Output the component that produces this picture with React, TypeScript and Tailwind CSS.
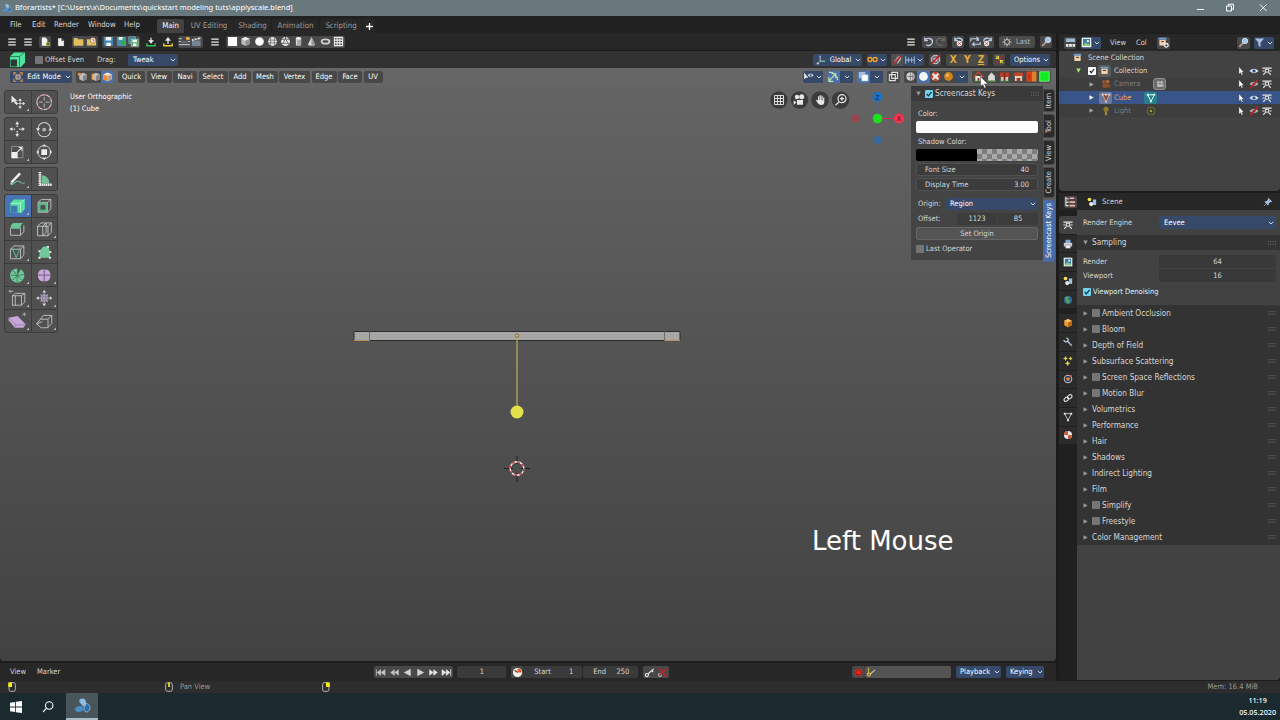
import React from "react";

interface IconProps {
  name: string;
  size?: number;
}

// 12x12 icon set shared by all editors
const ICONS: Record<string, React.ReactNode> = {
  menu: <path d="M1.5 2.5h9M1.5 6h9M1.5 9.5h9" stroke="#ececec" strokeWidth="1.5" />,
  newFile: (
    <>
      <path d="M2 1.5h4l2 2v7H2z" fill="#f2f2f2" />
      <circle cx="8.8" cy="8.6" r="2.4" fill="#b9b43a" />
      <path d="M8.8 7v3.2M7.2 8.6h3.2" stroke="#333" strokeWidth=".8" />
    </>
  ),
  file: <path d="M2.5 1.5h4.2L9.5 4.3v6.5h-7zM6.5 1.5v3h3" fill="#f4f4f4" stroke="#999" strokeWidth=".3" />,
  folder: <path d="M1 2.5h3.600l1 1.200H11v6.600H1z" fill="#e3bd5a" stroke="#f3dc8c" strokeWidth=".4" />,
  recent: (
    <>
      <path d="M1 3.5h3.6l1 1.2H11v5.6H1z" fill="#e3bd5a" />
      <circle cx="7.5" cy="4.5" r="3" fill="#f4e5d5" stroke="#7d5a30" strokeWidth=".6" />
      <path d="M7.5 3v1.7H9" stroke="#a33" strokeWidth=".8" fill="none" />
    </>
  ),
  save: (
    <>
      <path d="M1 1h10v10H2.2L1 9.8z" fill="#3f87b8" />
      <path d="M3 1h6v4H3zM3.6 7.3h5V11h-5z" fill="#f2f6f8" />
    </>
  ),
  saveAs: (
    <>
      <path d="M1 1h10v10H2.2L1 9.8z" fill="#4d8fb9" />
      <path d="M3 1h5v3H3z" fill="#f2f6f8" />
      <path d="M8 2v6M5.2 6 8 9.4 10.8 6" stroke="#28b53c" strokeWidth="2" fill="none" />
    </>
  ),
  saveCopy: (
    <>
      <path d="M.8.8h7.4v7.4H.8z" fill="#3c7ca8" stroke="#8ecb9b" strokeWidth=".6" />
      <path d="M3.5 3.5h7.7v7.7H3.5z" fill="#5ea571" stroke="#c6ead0" strokeWidth=".6" />
      <path d="M5 4h4.6v2.8H5zM5.5 8.3h3.7V11H5.5z" fill="#f4fff6" />
    </>
  ),
  import: (
    <>
      <path d="M1 7.5v3h10v-3" stroke="#35c04d" strokeWidth="1.6" fill="none" />
      <path d="M6 .8v5.4M4 4.5 6 7l2-2.500z" stroke="#f2f2f2" strokeWidth="1.4" fill="#f2f2f2" />
    </>
  ),
  export: (
    <>
      <path d="M1 7.5v3h10v-3" stroke="#e7cf35" strokeWidth="1.6" fill="none" />
      <path d="M6 8.5V3M4 3.700 6 1.2l2 2.500z" stroke="#f2f2f2" strokeWidth="1.4" fill="#f2f2f2" />
    </>
  ),
  renderImg: (
    <>
      <path d="M0 3h3M9 3h3M0 6h4M8 6h4M0 9.5h12" stroke="#ddd" strokeWidth="1" />
      <path d="M2 5.2h8v3H2z" fill="#5c666e" />
      <circle cx="9.5" cy="2.7" r="2" fill="#eda64c" />
    </>
  ),
  renderAnim: (
    <>
      <path d="M1 5h9.5v6H1z" fill="#768596" />
      <path d="m.8 3.6 9.3-2.3.4 2-9.3 2.2z" fill="#ddd" />
      <path d="m3 3 1 1.8M6 2.3l1 1.8" stroke="#333" strokeWidth=".9" />
    </>
  ),
  plane: <path d="M1 1h10v10H1z" fill="#fff" />,
  cube: (
    <>
      <path d="m6 1 4.5 2v5.6L6 11 1.5 8.6V3z" fill="#bcbcbc" />
      <path d="m6 1 4.5 2L6 5.2 1.5 3z" fill="#ececec" />
      <path d="M6 5.2V11l4.5-2.4V3z" fill="#929292" />
    </>
  ),
  circle: <circle cx="6" cy="6" r="4.7" fill="#fff" />,
  uvSphere: (
    <>
      <circle cx="6" cy="6" r="4.8" fill="#e8e8e8" />
      <path d="M1.2 4.5h9.6M1.2 7.5h9.6M4 1.6v8.8M8 1.6v8.8" stroke="#666" strokeWidth=".8" />
    </>
  ),
  icoSphere: (
    <>
      <circle cx="6" cy="6" r="4.8" fill="#e8e8e8" />
      <path d="M6 3 9 8H3zM6 1v2M9 8l2 1M3 8 1 9M1.5 4 6 3l4.5 1" stroke="#555" strokeWidth=".9" fill="none" />
    </>
  ),
  cylinder: (
    <>
      <path d="M3 2.5v7c0 2 6 2 6 0v-7z" fill="#a9a9a9" />
      <ellipse cx="6" cy="2.6" rx="3" ry="1.4" fill="#efefef" />
      <path d="M4 4v6" stroke="#e4e4e4" />
    </>
  ),
  cone: (
    <>
      <path d="m6 1 4 8.5C9 11 3 11 2 9.5z" fill="#d8d8d8" />
      <path d="m6 1 4 8.5q-1.500 1-4 1.100z" fill="#9b9b9b" />
    </>
  ),
  torus: <ellipse cx="6" cy="6" rx="4.3" ry="2.4" fill="none" stroke="#cfcfcf" strokeWidth="1.9" />,
  grid: <path d="M1.5 1.5h9v9h-9zM4.5 1.5v9M7.5 1.5v9M1.5 4.5h9M1.5 7.5h9" stroke="#f0f0f0" fill="none" strokeWidth="1.1" />,
  undo: <path d="M2 1.5V5h3.5M2.3 4.7C4 1.5 10.5 2 10.3 6.5 10 10.5 5.5 11 3.5 9.5" stroke="#b9c8da" strokeWidth="1.5" fill="none" />,
  redo: <path d="M10 1.5V5H6.5M9.7 4.7C8 1.5 1.5 2 1.7 6.5 2 10.5 6.5 11 8.5 9.5" stroke="#6a6a6a" strokeWidth="1.4" fill="none" />,
  history: (
    <>
      <path d="M2 1.5V5h3.5M2.3 4.7C4 1 10.5 2 10 6" stroke="#b9cfe4" strokeWidth="1.4" fill="none" />
      <circle cx="7" cy="8.2" r="2.9" fill="#f2e6e2" />
      <path d="m5.5 7 3 2.4M8.5 7l-3 2.4" stroke="#c33" strokeWidth=".8" />
    </>
  ),
  repeatLast: (
    <>
      <path d="M10 1.5V5H6.5M9.7 4.7C8 1 1.5 2 2 6" stroke="#b9cfe4" strokeWidth="1.4" fill="none" />
      <circle cx="5" cy="8.2" r="2.9" fill="#f2e6e2" />
      <path d="m3.5 7 3 2.4M6.5 7l-3 2.4" stroke="#c33" strokeWidth=".8" />
    </>
  ),
  repeat: <path d="M9 5.500V3H.8v3M3 9h8.200V6.500M5 7 2.800 9 5 11M7 1l2.200 2L7 5" stroke="#b9cfe4" strokeWidth="1.2" fill="none" />,
  gear: (
    <>
      <circle cx="6" cy="6" r="3" fill="none" stroke="#ccc" strokeWidth="1.2" />
      <path d="M6 .5v2M6 9.5v2M.5 6h2M9.500 6h2M2.2 2.2l1.2 1.2M8.6 8.6l1.2 1.2M9.8 2.2 8.6 3.4M3.4 8.6 2.2 9.8" stroke="#ccc" strokeWidth="1.1" />
    </>
  ),
  search: (
    <>
      <path d="M5.5 6.5 1.5 10.7" stroke="#b99b8d" strokeWidth="2" />
      <circle cx="7.6" cy="4.3" r="3" fill="#9ec4e8" stroke="#dce9f5" strokeWidth=".9" />
    </>
  ),
  axes: (
    <>
      <path d="M5 1.5v6h6M5 7.5 2 10.5" stroke="#d6d6d6" strokeWidth="1" fill="none" />
      <path d="M5 7.5h6" stroke="#5fc08a" strokeWidth="1" />
      <circle cx="5" cy="1.8" r="1.2" fill="#6aa5de" />
      <circle cx="2" cy="10.3" r="1.2" fill="#ddd" />
    </>
  ),
  pivot: (
    <>
      <circle cx="3.2" cy="6" r="2.2" fill="#4a3a20" stroke="#f0a73a" strokeWidth="1.5" />
      <circle cx="8.8" cy="6" r="2.2" fill="#4a3a20" stroke="#f0a73a" strokeWidth="1.5" />
    </>
  ),
  magnet: (
    <>
      <path d="M3 8.5 7 3c2-1.500 4 .5 2.600 2.500L6.500 10" stroke="#bbb" strokeWidth="1.6" fill="none" />
      <path d="M1.5 10.5 10.5 1.5" stroke="#c22733" strokeWidth="1.9" />
    </>
  ),
  snapInc: <path d="M.8 1.5v9M4 3v6M8 3v6M11.2 1.5v9M.8 6h10.4" stroke="#9fc1e6" strokeWidth="1.1" />,
  noProp: (
    <>
      <circle cx="6" cy="6" r="4.600" fill="#777" stroke="#d5d5d5" strokeWidth="1" />
      <circle cx="6" cy="6" r="2" fill="#eee" />
      <path d="M1.5 10.5 10.5 1.5" stroke="#c8202c" strokeWidth="2" />
    </>
  ),
  mirrorOff: (
    <>
      <path d="m1.800 1.800 8.400 8.400" stroke="#b7c04a" strokeWidth="1.300" />
      <path d="m10.500 1.500-9 9" stroke="#a33030" strokeWidth="1.300" />
      <path d="M4.800 1.800v3h-3M7.200 10.200v-3h3" stroke="#e3d446" strokeWidth="1.400" fill="none" />
    </>
  ),
  editMode: (
    <>
      <path d="M3.5 3.5h5v5h-5z" fill="#8a7361" stroke="#f2efe8" strokeWidth=".8" />
      <path d="M1 4V1h3M8 1h3v3M11 8v3H8M4 11H1V8" stroke="#f0963a" strokeWidth="1.3" fill="none" />
    </>
  ),
  vertSel: (
    <>
      <path d="m6.5 2 4 1.5V9l-4 2-4-2V3.5z" fill="#bdbdbd" />
      <path d="M6.5 5.5V11l4-2V3.5z" fill="#858585" />
      <circle cx="2.5" cy="3.5" r="1.6" fill="#f09a3a" />
    </>
  ),
  edgeSel: (
    <>
      <path d="m6.5 2 4 1.5V9l-4 2-4-2V3.5z" fill="#bdbdbd" />
      <path d="M6.5 5.5V11l4-2V3.5z" fill="#858585" />
      <path d="M2.5 3v6.5" stroke="#f09a3a" strokeWidth="1.5" />
    </>
  ),
  faceSel: (
    <>
      <path d="m6 1.5 4.5 2v5.7L6 11.2 1.5 9.2V3.5z" fill="#f3e6d4" />
      <path d="M1.5 3.5 6 5.5v5.7l-4.5-2z" fill="#ee8c2b" />
      <path d="M6 5.5v5.7l4.5-2V3.5z" fill="#b8a391" />
    </>
  ),
  selectable: (
    <>
      <path d="M1.2 1.500v7.500l2-1.700h2.600z" fill="#e6e6e6" />
      <path d="M5 4.500q3.300-3.500 6.600 0-3.300 3.500-6.600 0" fill="#e9edf2" />
      <circle cx="8.300" cy="4.500" r="1.300" fill="#3c6db0" />
    </>
  ),
  gizmoShow: <path d="M1 1.500c5-1 9 3 9.500 8.500M1 11l7-7.500M1 6.5v4.800h4.600M8.500 7.500V3H4" stroke="#c4e6a0" strokeWidth="1.2" fill="none" />,
  overlays: (
    <>
      <path d="M1 1h7v7H1z" fill="#a9bfdf" />
      <path d="M4 4h7v7H4z" fill="#fff" stroke="#9bb2d6" strokeWidth=".6" />
    </>
  ),
  xray: (
    <>
      <path d="M4 1.5h6.5V8H4z" fill="none" stroke="#ddd" strokeWidth="1.2" />
      <path d="M1.500 4H8v6.5H1.5z" fill="none" stroke="#ddd" strokeWidth="1.2" />
    </>
  ),
  wire: (
    <>
      <circle cx="6" cy="6" r="4.6" fill="#d5d5d5" />
      <path d="M1.5 6h9M6 1.400v9.2M8.5 2.500v7" stroke="#666" strokeWidth=".8" />
    </>
  ),
  solid: <circle cx="6" cy="6" r="4.8" fill="#f4f7fb" />,
  material: (
    <>
      <circle cx="6" cy="6" r="4.8" fill="#f2e7e4" />
      <path d="M6 4 3 1.900A4.800 4.800 0 0 1 9 1.900zM6 8l3 2.100A4.800 4.800 0 0 1 3 10.100zM4 6 1.900 9A4.800 4.800 0 0 1 1.900 3zM8 6l2.100-3A4.800 4.800 0 0 1 10.100 9z" fill="#c8402f" />
    </>
  ),
  rendered: (
    <>
      <circle cx="6" cy="6" r="4.8" fill="#cf8420" />
      <circle cx="4.7" cy="4.5" r="1.8" fill="#f1b45c" />
    </>
  ),
  home: (
    <>
      <path d="M2.5 5.5h7V11h-7z" fill="#f0e4d5" />
      <path d="M.800 6.500 6 1l5.200 5.500" stroke="#b8472f" strokeWidth="1.700" fill="none" />
      <path d="M5 7.500h2V11H5z" fill="#84402a" />
      <path d="M1 11.200h10" stroke="#3e8a3b" />
    </>
  ),
  homeWhite: (
    <>
      <path d="M2.300 5.500 6 1.500l3.700 4v5H2.300z" fill="#d9d9d9" />
      <path d="M1 11h10" stroke="#55a94a" />
    </>
  ),
  homeRed: (
    <>
      <path d="M1 1.500h10v5H1z" fill="#b8402c" />
      <path d="M2 6.500h8V11H2z" fill="#d3c7b7" />
      <path d="M5 1.500h2V11H5z" fill="#7e2f22" />
      <path d="M1 11.200h10" stroke="#3e8a3b" />
    </>
  ),
  homeFront: (
    <>
      <path d="M1.5 1.5h9l1 4H.5z" fill="#c0452c" />
      <path d="M2 5.5h8V11H2z" fill="#e2cfba" />
      <path d="M4 7.5h4V11H4z" fill="#a03a28" />
    </>
  ),
  homeSplit: (
    <>
      <path d="M.5.5h6v11h-6z" fill="#e23c18" />
      <path d="M6.5.5h5v11h-5z" fill="#d9832c" />
      <path d="M3.5 3v6" stroke="#8c2b12" strokeWidth="1" />
    </>
  ),
  greenBox: <path d="M.8.8h10.400v10.400H.8z" fill="#10ea20" stroke="#9aff9a" strokeWidth=".8" />,
  outliner: (
    <>
      <path d="M1 1.5h10v4H1z" fill="#9fbbd4" />
      <path d="M1 7.5h10v3H1z" fill="#ececec" />
      <path d="M4 8v2.5M8 8v2.5" stroke="#555" />
    </>
  ),
  viewLayer: (
    <>
      <path d="M.8.8h10.400v10.400H.8z" fill="#f1f5f8" />
      <path d="M2.2 2.2h7.6v7.6H2.2z" fill="#3b79a8" />
      <path d="m2.2 9.8 3-4L7 7.800l1-1 1.800 3z" fill="#8fd27d" />
      <circle cx="7.5" cy="4.5" r="1.2" fill="#fff" />
    </>
  ),
  collection: (
    <>
      <path d="M1 1h10v2.5H1z" fill="#6d9bd0" />
      <path d="M1.8 3.8h8.4v7H1.8z" fill="#f0cfae" />
      <path d="M4 5.8h4" stroke="#3c3026" strokeWidth="1.3" />
    </>
  ),
  newCollection: (
    <>
      <path d="M.8.8h8.4v2.3H.8z" fill="#6d9bd0" />
      <path d="M1.5 3.4h7v6h-7z" fill="#f0cfae" />
      <path d="M3.5 5h3" stroke="#3c3026" strokeWidth="1" />
      <circle cx="9" cy="9" r="2.7" fill="#fff" />
      <path d="M9 7.3v3.4M7.3 9h3.4" stroke="#333" strokeWidth=".9" />
    </>
  ),
  filter: <path d="M1 1.5h10L7.2 6v5L4.800 9.500V6z" fill="#a9c0dd" />,
  pointer: <path d="M3.5.8v9l2-1.800 1.400 3 1.500-.7L7 7.500h2.500z" fill="#fafafa" stroke="#222" strokeWidth=".4" />,
  eye: (
    <>
      <path d="M.5 6Q6 .8 11.5 6 6 11.2.5 6" fill="#e7edf5" />
      <circle cx="6" cy="6" r="2.2" fill="#4674b8" />
      <circle cx="6" cy="6" r="1" fill="#16243c" />
    </>
  ),
  eyeOff: (
    <>
      <path d="M.5 6Q6 .8 11.5 6 6 11.2.5 6" fill="#b4b4b4" />
      <circle cx="6" cy="6" r="1.8" fill="#444" />
      <path d="M1.5 11 10.5 1" stroke="#c31f2b" strokeWidth="1.9" />
    </>
  ),
  restrict: (
    <>
      <path d="M.5 2.500h11M.5 6h2.5M9 6h2.5M1.500 10.500 4 8M10.500 10.500 8 8" stroke="#e8e8e8" strokeWidth="1.3" />
      <path d="M3.500 3.500h5V8h-5z" fill="#d5d5d5" />
      <circle cx="6" cy="5.7" r="1.3" fill="#3c3c3c" />
    </>
  ),
  cameraObj: (
    <>
      <circle cx="3.5" cy="3.5" r="2.3" fill="#94552f" />
      <circle cx="8" cy="3.2" r="2.3" fill="#a8653a" />
      <path d="M2 6h7v4.500H2zM9 7.500l2.500-1.200v4L9 9z" fill="#8a4f2c" />
    </>
  ),
  cameraData: (
    <>
      <circle cx="4" cy="4" r="1.8" fill="#b5b5b5" />
      <circle cx="8" cy="4" r="1.8" fill="#b5b5b5" />
      <path d="M2.500 6h6v3.500h-6zM8.500 7l2-1v3.500l-2-.8z" fill="#b5b5b5" />
    </>
  ),
  meshObj: (
    <>
      <path d="M2 2h8L6 10.500z" fill="#7b5148" stroke="#e9a987" strokeWidth="1" />
      <path d="M1 1h2v2H1zM9 1h2v2H9zM5 9.500h2v2H5zM5 1h2v2H5z" fill="#f3d8cb" />
    </>
  ),
  meshData: (
    <>
      <path d="M2 2.2h8L6 10z" fill="none" stroke="#dff5f0" strokeWidth="1.2" />
      <path d="M1 1h2v2H1zM9 1h2v2H9zM5 9h2v2H5z" fill="#f0fffc" />
    </>
  ),
  lightObj: (
    <>
      <circle cx="6" cy="4" r="3" fill="#8f7b22" />
      <path d="M4.700 6.500h2.600V11H4.700z" fill="#9b8a3a" />
    </>
  ),
  lightData: (
    <>
      <circle cx="6" cy="6" r="4.8" fill="none" stroke="#7f7a20" strokeWidth="1" />
      <circle cx="6" cy="6" r="1.5" fill="#a89e28" />
    </>
  ),
  propEditor: (
    <>
      <path d="M1 1v9.5h3M1 3h3M1 6.7h3" stroke="#ddd" strokeWidth="1.2" fill="none" />
      <path d="M5 2.500h5M5 6.700h6M5 10.500h6" stroke="#f0b0a4" strokeWidth="1.7" />
    </>
  ),
  scene: (
    <>
      <circle cx="3" cy="3" r="2.2" fill="#f4e25a" />
      <path d="M7 3h4v6.500H7z" fill="#9bc2e8" />
      <circle cx="5" cy="8.5" r="2.5" fill="#e9e9e9" />
    </>
  ),
  pin: <path d="m6.5 1.500 4 4-2 .3-2 2-.3 2L2.200 5.800l2-.3 2-2zM4 8 1 11" fill="#9bbfe6" stroke="#cfe0f3" strokeWidth=".7" />,
  output: (
    <>
      <path d="M3 .8h6V5H3z" fill="#79a7d8" />
      <path d="M1 4.500h10V9H1z" fill="#c9cdd3" />
      <path d="M3 7.500h6v3.700H3z" fill="#f4f4f4" stroke="#777" strokeWidth=".5" />
    </>
  ),
  world: (
    <>
      <circle cx="6" cy="6" r="4.8" fill="#2f68a0" />
      <path d="M2 3q3-2 5-.5L6 5l2.500 2L7 10.300Q4 10.500 3.500 7.500z" fill="#4fa552" />
    </>
  ),
  object: (
    <>
      <path d="m6 1.200 4.500 2v5.500L6 11 1.500 8.700V3.200z" fill="#f09a2a" />
      <path d="M6 5.300V11l4.500-2.300V3.200z" fill="#b8650e" />
      <path d="m6 1.200 4.500 2L6 5.300 1.500 3.200z" fill="#ffc163" />
    </>
  ),
  wrench: (
    <>
      <path d="M5 4.500l5.500 6" stroke="#a8b7cf" strokeWidth="1.900" />
      <path d="M1 3.500c.5 2.500 3 3 4.500 1.500S6.500 1.500 4 1" stroke="#c3cee0" strokeWidth="1.500" fill="none" />
    </>
  ),
  particles: (
    <path
      d="M3 .5 3.700 2.300 5.500 3l-1.800.7L3 5.500l-.7-1.800L.5 3l1.800-.7zM9 1l.6 1.400L11 3l-1.400.6L9 5l-.6-1.400L7 3l1.400-.6zM5.500 6l.8 2 2 .8-2 .8-.8 2-.8-2-2-.8 2-.8z"
      fill="#f1e04d"
      stroke="#f1e04d"
      strokeWidth=".5"
    />
  ),
  physics: (
    <>
      <circle cx="6" cy="6" r="4.6" fill="#23395d" stroke="#e4ddd4" strokeWidth="1" />
      <circle cx="6" cy="6" r="2.2" fill="#ec8b3b" />
      <circle cx="9.5" cy="2.500" r="1.2" fill="#e0552f" />
    </>
  ),
  constraint: (
    <g fill="none" stroke="#dcdcdc" strokeWidth="1.4">
      <ellipse cx="4" cy="7.5" rx="3" ry="2.1" transform="rotate(-40 4 7.5)" />
      <ellipse cx="8" cy="4.5" rx="3" ry="2.1" transform="rotate(-40 8 4.5)" />
    </g>
  ),
  meshTab: (
    <>
      <path d="M2 2h8L6 10z" fill="none" stroke="#ddd" strokeWidth="1" />
      <path d="M1 1h2v2H1zM9 1h2v2H9zM5 9h2v2H5z" fill="#f4f4f4" />
    </>
  ),
  matTab: (
    <>
      <circle cx="6" cy="6" r="4.8" fill="#f0e8e4" />
      <path d="M6 6V1.200A4.800 4.800 0 0 0 1.200 6zM6 6v4.800A4.800 4.800 0 0 0 10.800 6z" fill="#c65a3a" />
    </>
  ),
  toStart: <path d="M1.5 2.500v7M6.200 3v6L2.500 6zM10.800 3v6L7 6z" fill="#c4c4c4" stroke="#c4c4c4" strokeWidth=".9" />,
  prevKey: <path d="M5.800 3v6l-4-3zM10.300 3v6l-4-3z" fill="#c4c4c4" stroke="#c4c4c4" strokeWidth=".6" />,
  playBack: <path d="M9.500 1.800v8.400L2 6z" fill="#d2d2d2" />,
  play: <path d="M2.500 1.800v8.400L10 6z" fill="#d2d2d2" />,
  nextKey: <path d="M1.700 3v6l4-3zM6.200 3v6l4-3z" fill="#e6e6e6" stroke="#e6e6e6" strokeWidth=".6" />,
  toEnd: <path d="M10.500 2.500v7M5.800 3v6l3.700-3zM1.200 3v6L5 6z" fill="#e6e6e6" stroke="#e6e6e6" strokeWidth=".9" />,
  clock: (
    <>
      <circle cx="6" cy="6" r="5" fill="#f4f0ea" />
      <path d="M6 6V1.500A4.500 4.500 0 0 1 10.500 6z" fill="#d9602e" />
      <path d="M6 6 3 3.500" stroke="#7a2c18" strokeWidth="1.3" />
    </>
  ),
  key: (
    <>
      <circle cx="3.2" cy="8.8" r="1.7" fill="none" stroke="#eee" strokeWidth="1.2" />
      <path d="M4.500 7.500 10.500 2M8.500 4l1.500 1.700" stroke="#eee" strokeWidth="1.3" />
    </>
  ),
  keyOff: (
    <>
      <circle cx="3.2" cy="8.8" r="1.7" fill="none" stroke="#c9a0a0" strokeWidth="1.2" />
      <path d="m2 1.500 8.500 9M10.500 1.500 4 8" stroke="#b3262e" strokeWidth="1.9" />
    </>
  ),
  record: (
    <>
      <circle cx="6" cy="6" r="4" fill="#5b1a1a" stroke="#d9413c" strokeWidth=".9" />
      <circle cx="6" cy="6" r="2.7" fill="#f01f1f" />
    </>
  ),
  keySet: (
    <>
      <path d="M3 1v8" stroke="#c8a93c" strokeWidth="1.5" />
      <circle cx="3.5" cy="9" r="1.9" fill="none" stroke="#d9ba46" strokeWidth="1.3" />
      <path d="M5 8.500 11 3.500" stroke="#d8d0a8" strokeWidth="1.3" />
    </>
  ),
  mouseL: (
    <>
      <rect x="2.5" y=".8" width="7.5" height="10.4" rx="2" fill="none" stroke="#ccc" strokeWidth="1" />
      <path d="M1.500.500H6V6H1.500z" fill="#f0ee1c" />
    </>
  ),
  mouseM: (
    <>
      <rect x="2" y=".8" width="8" height="10.4" rx="2.5" fill="none" stroke="#ccc" strokeWidth="1" />
      <path d="M5 1h2v5H5z" fill="#f0ee1c" />
    </>
  ),
  mouseR: (
    <>
      <rect x="2" y=".8" width="7.5" height="10.4" rx="2" fill="none" stroke="#ccc" strokeWidth="1" />
      <path d="M6 .500h4.500V6H6z" fill="#f0ee1c" />
    </>
  ),
  logo: (
    <>
      <path d="M.5 8.800C1.500 6.500 4 5.800 6.200 6.800 7.500 8 6 10.500 3.500 10.500 2 10.500.8 10 .5 8.800z" fill="#4a8fc7" />
      <path d="M3.800 2C6 .2 8.800 1 8.600 4.800L6.800 7C5.500 5 3 3.800 3.800 2z" fill="#8abde4" />
      <path d="M8.200 4.500c2 0 3.500 1.800 3 4C10.500 11.200 7.300 11 7 9c0-1.500 1.300-2.500 1.200-4.500z" fill="#2f6ca8" stroke="#a8cdea" strokeWidth=".5" />
    </>
  ),
};

const Icon: React.FC<IconProps> = ({ name, size = 10 }) => (
  <svg width={size} height={size} viewBox="0 0 12 12" className="block shrink-0">
    {ICONS[name]}
  </svg>
);

const Chevron = () => (
  <svg width="6" height="4" viewBox="0 0 6 4" className="block shrink-0">
    <path d="M.8.8 3 3 5.200.8" stroke="#cfd8e6" strokeWidth="1" fill="none" />
  </svg>
);

const Grip = () => (
  <svg width="8" height="4" viewBox="0 0 8 4" className="block shrink-0">
    <path d="M0 .7h8M0 3.200h8" stroke="#777" strokeWidth=".9" strokeDasharray="1 1.3" />
  </svg>
);

const Arrow: React.FC<{ open?: boolean; color?: string }> = ({ open, color = "#9a9a9a" }) => (
  <svg width="5" height="5" viewBox="0 0 5 5" className="block shrink-0">
    <path d={open ? "M.3.5h4.400L2.500 4.700z" : "M.5.3v4.400L4.700 2.500z"} fill={color} />
  </svg>
);

const Check: React.FC<{ on?: boolean }> = ({ on }) =>
  on ? (
    <svg width="8" height="8" viewBox="0 0 8 8" className="block shrink-0">
      <rect width="8" height="8" rx="1" fill="#70d3f0" />
      <path d="m1.700 4 1.700 1.800L6.500 2" stroke="#14323c" strokeWidth="1.2" fill="none" />
    </svg>
  ) : (
    <div className="h-2 w-2 shrink-0 rounded-[1px] bg-[#757575]" />
  );

// Row of icon buttons that share one background
const IconGroup: React.FC<{
  icons: string[];
  className: string;
  active?: number;
  chevron?: boolean;
  blue?: boolean;
}> = ({ icons, className, active, chevron, blue }) => (
  <div
    className={`flex h-3 shrink-0 overflow-hidden rounded-[2px] ${blue ? "bg-[#374968]" : "bg-[#484848]"} ${className}`}
  >
    {icons.map((icon, i) => (
      <div
        key={icon + i}
        className={`flex flex-1 items-center justify-center ${active === i ? "bg-[#4a70b0]" : ""}`}
      >
        <Icon name={icon} size={11} />
      </div>
    ))}
    {chevron && (
      <div className="flex flex-1 items-center justify-center bg-[#374968]">
        <Chevron />
      </div>
    )}
  </div>
);

const TitleBar = () => (
  <div className="flex h-4 items-center bg-[#69787d] pl-0.5 font-['Noto_Sans','Open_Sans',sans-serif] text-white">
    <Icon name="logo" size={10} />
    <span className="ml-[3px] text-[7.5px] leading-none">
      Bforartists* [C:\Users\x\Documents\quickstart modeling tuts\applyscale.blend]
    </span>
    <svg width="80" height="10" viewBox="0 0 80 10" className="ml-auto mr-[8px]">
      <path d="M5 6.500h7M68 1.500 74.500 8M74.500 1.500 68 8" stroke="#fff" strokeWidth="1" />
      <path d="M34.500 3h5v5h-5zM36.500 3V1.200h5v5h-2" stroke="#fff" strokeWidth="1" fill="none" />
    </svg>
  </div>
);

const workspaces = [
  { name: "Main", width: "w-[27px]" },
  { name: "UV Editing", width: "w-[48px]" },
  { name: "Shading", width: "w-[37px]" },
  { name: "Animation", width: "w-[47px]" },
  { name: "Scripting", width: "w-[42px]" },
];

const MenuBar = () => (
  <div className="flex h-[17px] bg-[#212121]">
    <div className="flex h-[17px] items-center pl-[10px] text-[7.8px]">
      <span className="w-[22px]">File</span>
      <span className="w-[22px]">Edit</span>
      <span className="w-[34px]">Render</span>
      <span className="w-[36px]">Window</span>
      <span className="w-[33px]">Help</span>
    </div>
    <div className="flex gap-px pt-[3px] text-[7.8px] text-[#9c9c9c]">
      {workspaces.map((w, i) => (
        <div
          key={w.name}
          className={`flex h-[14px] items-center justify-center rounded-t-[2px] ${w.width} ${
            i === 0 ? "bg-[#424242] text-white" : "bg-[#272727]"
          }`}
        >
          {w.name}
        </div>
      ))}
      <div className="flex w-3 items-center justify-center bg-[#272727]">
        <svg width="7" height="7" viewBox="0 0 7 7">
          <path d="M3.5 0v7M0 3.5h7" stroke="#fff" strokeWidth="1.3" />
        </svg>
      </div>
    </div>
  </div>
);

const Toolbar = () => (
  <div className="flex h-[17px] items-center bg-[#272727] pl-[7px] pr-1">
    <Icon name="menu" />
    <div className="ml-1.5">
      <Icon name="menu" />
    </div>
    <IconGroup className="ml-[6px] w-3" icons={["newFile"]} />
    <div className="ml-[5px]">
      <Icon name="file" />
    </div>
    <IconGroup className="ml-[6px] w-[26px]" icons={["folder", "recent"]} />
    <IconGroup className="ml-[4px] w-[38px]" icons={["save", "saveAs", "saveCopy"]} />
    <div className="ml-[6px] flex gap-[7px]">
      <Icon name="import" />
      <Icon name="export" />
    </div>
    <IconGroup className="ml-[5px] w-[25px]" icons={["renderImg", "renderAnim"]} />
    <div className="ml-[7px]">
      <Icon name="menu" />
    </div>
    <IconGroup
      className="ml-[6px] w-[119px]"
      icons={["plane", "cube", "circle", "uvSphere", "icoSphere", "cylinder", "cone", "torus", "grid"]}
    />
    <div className="ml-auto mr-[6px]">
      <Icon name="menu" />
    </div>
    <IconGroup className="w-[25px]" icons={["undo", "redo"]} />
    <IconGroup className="ml-[5px] w-3" icons={["history"]} />
    <IconGroup className="ml-[5px] w-[25px]" icons={["repeat", "repeatLast"]} />
    <div className="ml-[5px] flex h-3 w-[36px] items-center gap-[4px] rounded-[2px] bg-[#4a4a4a] pl-[3px] text-[#b8b8b8]">
      <Icon name="gear" />
      Last
    </div>
    <IconGroup className="ml-[5px] w-3" icons={["search"]} />
  </div>
);

const ToolSettings = () => (
  <div className="mt-px flex h-[17px] items-center bg-[#323232] pl-[10px] pr-[6px]">
    <svg width="15" height="15" viewBox="0 0 15 15">
      <path d="M0 4.500 4 .5h11v10L11 15H0z" fill="#4fe49e" />
      <path d="M0 4.500h9.500V15M9.500 4.500l5-4" stroke="#1e5f46" strokeWidth=".7" fill="none" />
      <path d="M.5 7.500H7v7H.5z" fill="#2c3a35" />
    </svg>
    <div className="ml-[10px] flex w-[62px] items-center gap-[2px]">
      <Check />
      Offset Even
    </div>
    <span className="w-[31px]">Drag:</span>
    <div className="flex h-3 w-[50px] items-center justify-between rounded-[2px] bg-[#374968] pl-[5px] pr-[2px] text-white">
      Tweak
      <Chevron />
    </div>
    <div className="ml-auto flex items-center text-white">
      <div className="flex h-3 w-[49px] items-center justify-between rounded-[2px] bg-[#374968] pl-[3px] pr-px">
        <Icon name="axes" />
        Global
        <Chevron />
      </div>
      <IconGroup className="ml-[5px] w-5" icons={["pivot"]} chevron blue />
      <div className="ml-[4px] flex h-3 w-[33px] items-center overflow-hidden rounded-[2px] bg-[#374968]">
        <div className="flex h-3 w-3 items-center justify-center bg-[#505050]">
          <Icon name="magnet" />
        </div>
        <div className="mx-[2px]">
          <Icon name="snapInc" size={10} />
        </div>
        <Chevron />
      </div>
      <IconGroup className="ml-[5px] w-3" icons={["noProp"]} />
      <div className="ml-[5px] flex h-3 w-[42px] items-center justify-around rounded-[2px] bg-[#4a4a4a] text-[10px] font-bold text-[#e2a93c]">
        <span>X</span>
        <span>Y</span>
        <span className="underline">Z</span>
      </div>
      <IconGroup className="ml-[5px] w-3" icons={["mirrorOff"]} />
      <div className="ml-[5px] flex h-3 w-10 items-center justify-between rounded-[2px] bg-[#374968] pl-1 pr-px">
        Options
        <Chevron />
      </div>
    </div>
  </div>
);

const headerMenus = [
  { name: "Quick", width: "w-[27px]" },
  { name: "View", width: "w-[25px]" },
  { name: "Navi", width: "w-[24px]" },
  { name: "Select", width: "w-[29px]" },
  { name: "Add", width: "w-[22px]" },
  { name: "Mesh", width: "w-[25px]" },
  { name: "Vertex", width: "w-[31px]" },
  { name: "Edge", width: "w-[25px]" },
  { name: "Face", width: "w-[24px]" },
  { name: "UV", width: "w-[19px]" },
];

const ViewportHeader = () => (
  <div className="flex h-[17px] items-center bg-[#666666] pl-[10px] pr-[5px]">
    <div className="flex h-3 w-[62px] items-center justify-between rounded-[2px] bg-[#374968] pl-[3px] pr-px text-white">
      <Icon name="editMode" />
      Edit Mode
      <Chevron />
    </div>
    <IconGroup className="ml-1 w-[38px]" icons={["vertSel", "edgeSel", "faceSel"]} active={2} />
    <div className="ml-[4px] flex gap-[1.5px]">
      {headerMenus.map((m) => (
        <div
          key={m.name}
          className={`flex h-3 items-center justify-center rounded-[2px] bg-[#484848] text-white ${m.width}`}
        >
          {m.name}
        </div>
      ))}
    </div>
    <div className="ml-auto flex">
      <IconGroup className="w-5" icons={["selectable"]} chevron blue />
      <IconGroup className="ml-1 w-[26px]" icons={["gizmoShow"]} active={0} chevron />
      <IconGroup className="ml-1 w-[26px]" icons={["overlays"]} active={0} chevron />
      <IconGroup className="ml-[4px] w-[13px]" icons={["xray"]} />
      <IconGroup
        className="ml-[4px] w-[64px]"
        icons={["wire", "solid", "material", "rendered"]}
        active={1}
        chevron
      />
      <IconGroup
        className="ml-1 w-[79px]"
        icons={["home", "homeWhite", "homeRed", "homeFront", "homeSplit", "greenBox"]}
      />
    </div>
  </div>
);

// Drawings for the tool shelf, 20x20 each
const TOOLS: Record<string, React.ReactNode> = {
  select: (
    <>
      <path d="M4 3v8l2.200-1.700L8 12l1.200-.7L8 9h2.500z" fill="#e8e8e8" />
      <path d="M13 7v9M8.500 11.500h9M13 6.500l-1.300 1.700h2.600zM13 16.700 11.700 15h2.600zM8 11.500l1.700-1.300v2.600zM18 11.500l-1.700-1.300v2.600z" stroke="#e0e0e0" strokeWidth=".8" fill="#e0e0e0" />
    </>
  ),
  cursor: (
    <>
      <circle cx="10" cy="10" r="7.7" fill="none" stroke="#ddd" strokeWidth="1.1" />
      <circle cx="10" cy="10" r="7.7" fill="none" stroke="#c8626b" strokeWidth="1.1" strokeDasharray="3 3" />
      <path d="M10 4.500v4M10 11.500v4M4.500 10h4M11.500 10h4" stroke="#c8c8c8" strokeWidth=".9" />
    </>
  ),
  move: (
    <>
      <path d="M10 4v4M10 12v4M4 10h4M12 10h4" stroke="#e6e6e6" strokeWidth="1.3" strokeDasharray="1.5 .8" />
      <path d="m10 1.800 2 3H8zM10 18.200l2-3H8zM1.800 10l3-2v4zM18.200 10l-3-2v4z" fill="#e6e6e6" />
    </>
  ),
  rotate: (
    <>
      <path d="M3.500 9.500A6.500 6.500 0 0 1 16.500 9.500M16.500 12.500A6.600 6.600 0 0 1 3.500 12.500" fill="none" stroke="#d6d6d6" strokeWidth="1.1" />
      <path d="m1.300 9 2.200 3.200L5.700 9zM14.300 11.500l2.200-3.200 2.200 3.200z" fill="#e6e6e6" />
      <circle cx="10" cy="10.5" r="2" fill="#b4b4b4" />
    </>
  ),
  scale: (
    <>
      <path d="M4 4h12v12H4z" fill="none" stroke="#999" strokeWidth=".9" />
      <path d="M4 10h6.500v6.500H4z" fill="#f0f0f0" />
      <path d="m10 10 4.500-4.500M11.500 5.200h3.300v3.300" stroke="#e6e6e6" strokeWidth="1.2" fill="none" />
    </>
  ),
  transform: (
    <>
      <circle cx="10" cy="10" r="6.8" fill="none" stroke="#d6d6d6" strokeWidth="1" />
      <path d="M7 7h6v6H7z" fill="#f0f0f0" />
      <path d="m10 1.500 2 2.700H8zM10 18.500l2-2.700H8zM1.500 10l2.700-2v4zM18.500 10l-2.700-2v4z" fill="#e0e0e0" />
    </>
  ),
  annotate: (
    <>
      <path d="M4 13.500 13 4" stroke="#eee" strokeWidth="2.5" />
      <path d="m2.500 15.500 1-2.500 1.500 1.500z" fill="#ddd" />
      <path d="M3 16c5-.5 5-5 9-3.500 2 .8 3 3 6 1.500" stroke="#6fc297" strokeWidth="1.1" fill="none" />
    </>
  ),
  measure: (
    <>
      <path d="M7.500 14.500V6a8 8 0 0 1 8 8.500z" fill="#6fc297" />
      <path d="M5.500 2.500V16h13" stroke="#e9e9e9" strokeWidth="2.7" strokeDasharray="1.7 .5" fill="none" />
    </>
  ),
  extrude: (
    <>
      <path d="m3 7 3.500-4H18v10L14.500 17H3z" fill="#53e39f" />
      <path d="M3 7h10.500v10M13.500 7 18 3" stroke="#e2fff1" strokeWidth=".6" fill="none" />
      <path d="M3.500 9.500h6.700V17H3.500z" fill="#3f78ae" />
    </>
  ),
  inset: (
    <>
      <path d="M3.500 6 7 3h10v10l-3.500 3.500h-10zM3.500 6h10v10.500M13.500 6 17 3" stroke="#c9c9c9" strokeWidth=".9" fill="none" />
      <path d="M5 7.700h7.300V15H5z" fill="none" stroke="#5cb98a" strokeWidth="2.2" />
    </>
  ),
  bevel: (
    <>
      <path d="M3 9v7.500h10.500V9M13.500 16.500 17 13V6" stroke="#c9c9c9" strokeWidth=".9" fill="none" />
      <path d="M3 9.500c0-4 1.500-6 4-6h10c-2.500 0-3.500 3-3.500 6z" fill="#6cc597" />
    </>
  ),
  loopCut: (
    <path d="M3 7 6.500 3.500h11v10L14 17H3zM3 7h11v10M14 7l3.500-3.500M8.500 7v10M8.500 7 12 3.500v10L8.500 17" stroke="#c9d2cd" strokeWidth=".9" fill="none" />
  ),
  knife: (
    <>
      <path d="M3 7 6.500 3.500H17V13l-3.500 4H3zM3 7h10.500v10M13.500 7 17 3.500" stroke="#c9c9c9" strokeWidth=".9" fill="none" />
      <path d="m5 6 4 10 4-11" stroke="#59b287" strokeWidth="1.2" fill="none" />
    </>
  ),
  polyBuild: (
    <>
      <path d="M5 16V9l4-5h5l2 5v7z" fill="#6fc99b" />
      <path d="M4 15h2v2H4zM15 15h2v2h-2zM4 8h2v2H4zM13 3.500h2v2h-2zM15.500 9h2v2h-2z" fill="#f0f0f0" />
    </>
  ),
  spin: (
    <>
      <circle cx="10" cy="10.5" r="7.5" fill="#6fc99b" />
      <path d="M10 10.500V2.500h4.500z" fill="#515151" />
      <path d="M10 10.500 3 10M10 10.500l-5 5M10 10.500v7M10 10.500l5 5M10 10.500l7-1M10 10.500 5.500 5" stroke="#3d7559" strokeWidth=".9" />
    </>
  ),
  smooth: (
    <>
      <rect x="3.5" y="4" width="13" height="12.5" rx="5" fill="#c9a7d9" />
      <path d="M10 4v12.500M3.500 10h13" stroke="#6a5078" strokeWidth=".9" />
    </>
  ),
  slide: (
    <>
      <path d="M5 7.500 8 5h10v9l-3.500 3.500H5zM5 7.500h9.500v10M14.500 7.500 18 5M8 7.500v10" stroke="#c9c9c9" strokeWidth=".9" fill="none" />
      <path d="M2 2.800h4M2.800 1.500 1.500 2.800l1.300 1.300" stroke="#ddd" strokeWidth=".8" fill="none" />
    </>
  ),
  shrink: (
    <>
      <path d="M7 7h6v6H7zM10 4.500v11M4.500 10h11M6 6l8 8M14 6l-8 8" stroke="#c4b3d2" strokeWidth=".9" fill="none" />
      <path d="m10 1.500 2 2.700H8zM10 18.500l2-2.700H8zM1.500 10l2.700-2v4zM18.500 10l-2.700-2v4z" fill="#e0e0e0" />
    </>
  ),
  shear: (
    <>
      <path d="m1 6.500 9.500-2L19 13.500 16.500 17H7.500L1 9z" fill="#c9a7d9" />
      <path d="m1 6.500 7.500 7.500H19M8.500 14l-1 3" stroke="#8e6fa0" strokeWidth=".7" fill="none" />
      <path d="M15.500 2.800h4M17.500.8v4" stroke="#ccc" strokeWidth=".7" />
    </>
  ),
  rip: (
    <path d="M2 13 6 8l3-4h9v8.500L13.500 17H7zM6 8h8v9M14 8l4-4M2 13l6-2.500" stroke="#c9c9c9" strokeWidth=".9" fill="none" />
  ),
};

// "*" marks tools that hide a flyout
const toolGroups = [
  ["select*", "cursor"],
  ["move", "rotate", "scale*", "transform"],
  ["annotate*", "measure"],
  ["extrude*", "inset", "bevel", "loopCut*", "knife*", "polyBuild", "spin*", "smooth*", "slide*", "shrink*", "shear*", "rip*"],
];

const ToolShelf = () => (
  <div className="mt-[5px] flex w-[54px] flex-col gap-[3px]">
    {toolGroups.map((group) => (
      <div key={group[0]} className="grid grid-cols-2 gap-px overflow-hidden rounded-[3px] border border-[#3c3c3c] bg-[#3c3c3c]">
        {group.map((tool) => {
          const name = tool.replace("*", "");
          return (
            <div
              key={name}
              className={`flex h-[22px] items-end justify-center ${
                name === "extrude" ? "bg-[#4772b3]" : "bg-[#505050]"
              }`}
            >
              <svg width="25" height="22" viewBox="-3 -1 25 22">
                <g transform="translate(-.3 .6) scale(.95)">{TOOLS[name]}</g>
                {tool.endsWith("*") && <path d="M21 16.500V19h-2.500z" fill="#bbb" />}
              </svg>
            </div>
          );
        })}
      </div>
    ))}
  </div>
);

const NavButtons = () => (
  <svg width="80" height="18" viewBox="0 0 80 18" className="mt-[6px]">
    <g fill="#3b3b3b">
      <circle cx="9" cy="9" r="8.7" />
      <circle cx="29.5" cy="9" r="8.7" />
      <circle cx="50" cy="9" r="8.7" />
      <circle cx="70.5" cy="9" r="8.7" />
    </g>
    <path d="M4.500 4.500h9v9h-9zM7.500 4.500v9M10.500 4.500v9M4.500 7.500h9M4.500 10.500h9" stroke="#e8e8e8" strokeWidth=".9" fill="none" />
    <g fill="#e8e8e8">
      <circle cx="27" cy="6" r="2.2" />
      <circle cx="31.7" cy="5.7" r="2.5" />
      <path d="M27 9h6v4.700h-6zM26.500 11.300 23.700 9.500V14z" />
      <path d="M46 9.500 47 8.500 48 10V5.200h1.200V9h.5V4.200h1.200V9h.5V4.800h1.200v4.700h.5v-3h1.200V11c0 2-1 3-2.800 3-2.500 0-3.500-1.500-5.500-4.500z" />
    </g>
    <circle cx="72" cy="7.7" r="4" fill="none" stroke="#e8e8e8" strokeWidth="1.2" />
    <path d="m69 11-3.500 3.200M72 5.700v4M70 7.700h4" stroke="#e8e8e8" strokeWidth="1.2" />
  </svg>
);

const AxisGizmo = () => (
  <svg width="56" height="56" viewBox="0 0 56 56" className="mt-[5px]">
    <path d="M27.500 28V7" stroke="#2f74b8" strokeWidth="1.2" />
    <path d="M27.500 28.500H49" stroke="#d8304a" strokeWidth="1.2" />
    <circle cx="27.5" cy="7" r="5" fill="#1c72c4" />
    <circle cx="49" cy="28.5" r="5" fill="#f2344f" />
    <circle cx="27.5" cy="28.5" r="4.8" fill="#1de01d" />
    <circle cx="6" cy="28.5" r="4" fill="#9b4450" />
    <circle cx="27.5" cy="50" r="4" fill="#37699b" />
    <text x="27.5" y="9.600" textAnchor="middle" fontSize="7" fill="#0c2b4c">Z</text>
    <text x="49" y="31.100" textAnchor="middle" fontSize="7" fill="#4c0f18">X</text>
  </svg>
);

const ScreencastPanel = () => (
  <div className="mt-px h-[174px] w-[132px] shrink-0 bg-[#444444]">
    <div className="flex h-[15px] items-center bg-[#3a3a3a] pl-[5px] pr-1">
      <Arrow open />
      <div className="ml-[4px] mr-[2px]">
        <Check on />
      </div>
      <span className="text-[8.2px]">Screencast Keys</span>
      <div className="ml-auto">
        <Grip />
      </div>
    </div>
    <div className="px-[5px] pt-[7px]">
      <div className="flex h-[12px] items-center pl-[2px]">Color:</div>
      <div className="mt-px h-[12px] rounded-[2px] bg-white" />
      <div className="mt-[3px] flex h-[12px] items-center pl-[2px]">Shadow Color:</div>
      <div className="mt-px flex h-[12px] overflow-hidden rounded-[2px]">
        <div className="w-1/2 bg-black" />
        <div className="w-1/2 bg-[conic-gradient(#7d7d7d_25%,#a9a9a9_0_50%,#7d7d7d_0_75%,#a9a9a9_0)] bg-[length:10px_10px]" />
      </div>
      <div className="mt-[2px] flex h-[13px] items-center justify-between rounded-[2px] border border-[#505050] bg-[#3c3c3c] px-[8px]">
        <span>Font Size</span>
        <span>40</span>
      </div>
      <div className="mt-[2px] flex h-[13px] items-center justify-between rounded-[2px] border border-[#505050] bg-[#3c3c3c] px-[8px]">
        <span>Display Time</span>
        <span>3.00</span>
      </div>
      <div className="mt-[6px] flex h-[13px] items-center">
        <span className="w-[30px] pl-[2px]">Origin:</span>
        <div className="flex h-[12px] flex-1 items-center justify-between rounded-[2px] bg-[#374968] pl-[4px] pr-[2px] text-white">
          Region
          <Chevron />
        </div>
      </div>
      <div className="mt-[3px] flex h-[12px] items-center">
        <span className="w-[41px] pl-[2px]">Offset:</span>
        <div className="flex h-[12px] flex-1 gap-px text-center">
          <div className="flex flex-1 items-center justify-center rounded-l-[2px] bg-[#3c3c3c]">1123</div>
          <div className="flex flex-1 items-center justify-center rounded-r-[2px] bg-[#3c3c3c]">85</div>
        </div>
      </div>
      <div className="mt-[2px] flex h-[13px] items-center justify-center rounded-[2px] border border-[#666] bg-[#545454]">
        Set Origin
      </div>
      <div className="mt-[2px] flex h-[13px] items-center gap-[2px]">
        <Check />
        Last Operator
      </div>
    </div>
  </div>
);

const sideTabs = [
  { name: "Item", height: "h-[23px]" },
  { name: "Tool", height: "h-[24px]" },
  { name: "View", height: "h-[25px]" },
  { name: "Create", height: "h-[31px]" },
  { name: "Screencast Keys", height: "h-[62px]" },
];

const SideTabs = () => (
  <div className="mr-px mt-[4px] flex w-3 shrink-0 flex-col gap-[2px]">
    {sideTabs.map((tab, i) => (
      <div
        key={tab.name}
        className={`flex items-center justify-center rounded-r-[3px] ${tab.height} ${
          i === 4 ? "bg-[#4a6aa5] text-white" : "border border-[#4a4a4a] bg-[#2b2b2b]"
        }`}
      >
        <span className="rotate-180 [writing-mode:vertical-rl]">{tab.name}</span>
      </div>
    ))}
  </div>
);

const Viewport = () => (
  <div className="relative flex h-[593px] flex-col overflow-hidden rounded-b-[4px] bg-linear-to-b from-[#646464] from-3% via-[#535353] via-50% to-[#424242] to-100%">
    {/* mesh, 3d cursor and extrude gizmo on the canvas */}
    <svg width="1056" height="593" viewBox="0 68 1056 593" className="absolute left-0 top-0">
      <path d="M354 331.500h326v9H354z" fill="#a6a7a5" stroke="#2c2c2c" strokeWidth="1" />
      <path d="M369.500 331.500v9M664.500 331.500v9" stroke="#6d6d6d" strokeWidth="1" />
      <path d="M354 340.500h15.500M664.500 340.500H680" stroke="#b98a55" strokeWidth="1" />
      <path d="M517 337v70" stroke="#b9b35c" strokeWidth="1.2" />
      <circle cx="517" cy="335.7" r="1.7" fill="#c7b28d" stroke="#8e6433" strokeWidth=".9" />
      <circle cx="517" cy="412" r="6.5" fill="#e4df4c" />
      <path d="M517 456v8M517 473v9M504 468.500h9M521 468.500h9" stroke="#1e1e1e" strokeWidth="1" />
      <circle cx="517" cy="468.5" r="6.8" fill="none" stroke="#f4f4f4" strokeWidth="1.4" />
      <circle cx="517" cy="468.5" r="6.8" fill="none" stroke="#cc3340" strokeWidth="1.4" strokeDasharray="2.67 2.67" />
    </svg>
    <ViewportHeader />
    <div className="relative flex pl-[4px]">
      <ToolShelf />
      <div className="ml-3 mt-[6px] leading-[11.5px] text-white">
        <div>User Orthographic</div>
        <div>(1) Cube</div>
      </div>
      <div className="ml-auto mr-[5px] flex">
        <NavButtons />
        <AxisGizmo />
      </div>
      <ScreencastPanel />
      <SideTabs />
    </div>
    <span className="absolute left-[812px] top-[456px] font-['DejaVu_Sans',sans-serif] text-[26px] leading-[34px] text-white">
      Left Mouse
    </span>
    <svg width="9" height="13" viewBox="0 0 9 13" className="absolute left-[980px] top-[8px]">
      <path d="M.5.5v10l2.300-2 1.600 3.700 1.700-.8L4.500 8H8z" fill="#fff" stroke="#222" strokeWidth=".5" />
    </svg>
  </div>
);

const Timeline = () => (
  <div className="mt-[2px] flex h-[18px] items-center bg-[#272727] pl-[10px] pr-[12px]">
    <span className="w-[27px]">View</span>
    <span>Marker</span>
    <IconGroup
      className="ml-[314px] w-[79px]"
      icons={["toStart", "prevKey", "playBack", "play", "nextKey", "toEnd"]}
    />
    <div className="ml-[4px] flex h-3 w-[49px] items-center justify-center rounded-[2px] bg-[#3a3a3a]">1</div>
    <IconGroup className="ml-[5px] w-3" icons={["clock"]} />
    <div className="flex h-3 w-[59px] items-center justify-between rounded-[2px] bg-[#3a3a3a] pl-[11px] pr-[9px]">
      <span>Start</span>
      <span>1</span>
    </div>
    <div className="ml-px flex h-3 w-[55px] items-center justify-between rounded-[2px] bg-[#3a3a3a] pl-[10px] pr-[9px]">
      <span>End</span>
      <span>250</span>
    </div>
    <IconGroup className="ml-[5px] w-[26px]" icons={["key", "keyOff"]} />
    <div className="ml-auto flex items-center">
      <IconGroup className="w-[13px]" icons={["record"]} />
      <div className="flex h-3 w-[86px] items-center rounded-[2px] bg-[#545454] pl-px">
        <Icon name="keySet" />
      </div>
      <div className="ml-[5px] flex h-3 w-[45px] items-center justify-between rounded-[2px] bg-[#374968] pl-1 pr-px text-white">
        Playback
        <Chevron />
      </div>
      <div className="ml-[5px] flex h-3 w-[38px] items-center justify-between rounded-[2px] bg-[#374968] pl-1 pr-px text-white">
        Keying
        <Chevron />
      </div>
    </div>
  </div>
);

const Restrictions: React.FC<{ hidden?: boolean }> = ({ hidden }) => (
  <div className="ml-auto flex gap-[3px]">
    <Icon name="pointer" size={10} />
    <Icon name={hidden ? "eyeOff" : "eye"} size={10} />
    <Icon name="restrict" size={10} />
  </div>
);

const Outliner = () => (
  <div className="h-[157px] overflow-hidden rounded-b-[4px] bg-[#424242]">
    <div className="flex h-[17px] items-center bg-[#272727] pl-[5px] pr-[6px]">
      <IconGroup className="w-3" icons={["outliner"]} />
      <IconGroup className="ml-[5px] w-5" icons={["viewLayer"]} chevron blue />
      <span className="ml-[9px] w-[26px]">View</span>
      <span className="w-[21px]">Col</span>
      <IconGroup className="w-[13px]" icons={["newCollection"]} />
      <IconGroup className="ml-auto w-[13px]" icons={["search"]} />
      <IconGroup className="ml-1 w-5" icons={["filter"]} chevron blue />
    </div>
    <div className="*:flex *:h-[13.3px] *:items-center *:pr-[8px]">
      <div className="pl-[14px]">
        <Icon name="collection" size={9} />
        <span className="ml-[6px]">Scene Collection</span>
      </div>
      <div className="pl-[17px]">
        <Arrow open color="#a5e878" />
        <div className="ml-[7px] flex h-2 w-2 items-center justify-center rounded-[1px] bg-white">
          <svg width="6" height="6" viewBox="0 0 6 6">
            <path d="m.8 3 1.500 1.700L5.200 1" stroke="#222" strokeWidth="1.2" fill="none" />
          </svg>
        </div>
        <div className="ml-[2px] flex h-3 w-[13px] items-center justify-center rounded-[2px] bg-[#5a5a5a]">
          <Icon name="collection" size={9} />
        </div>
        <span className="ml-[3px]">Collection</span>
        <Restrictions />
      </div>
      <div className="bg-[#3e3e3e] pl-[30px] text-[#7c7c7c]">
        <Arrow color="#a6a6a6" />
        <div className="ml-[5px] flex w-[14px] justify-center">
          <Icon name="cameraObj" />
        </div>
        <span className="w-[40px] pl-px">Camera</span>
        <div className="flex h-3 w-[13px] items-center justify-center rounded-[3px] border border-[#909090] bg-[#6b6b6b]">
          <Icon name="cameraData" />
        </div>
        <Restrictions hidden />
      </div>
      <div className="bg-[#385488] pl-[30px] text-[#eba45b]">
        <Arrow color="#fff" />
        <div className="ml-[5px] mr-px flex h-3 w-[13px] items-center justify-center rounded-[2px] bg-[#6b7ba0]">
          <Icon name="meshObj" />
        </div>
        <span className="w-[31px] pl-px">Cube</span>
        <div className="flex h-3 w-[13px] items-center justify-center rounded-[2px] bg-[#27808c]">
          <Icon name="meshData" />
        </div>
        <Restrictions />
      </div>
      <div className="bg-[#3e3e3e] pl-[30px] text-[#7c7c7c]">
        <Arrow color="#a6a6a6" />
        <div className="ml-[5px] flex w-[14px] justify-center">
          <Icon name="lightObj" />
        </div>
        <span className="w-[33px] pl-px">Light</span>
        <Icon name="lightData" />
        <Restrictions hidden />
      </div>
    </div>
  </div>
);

const sections = [
  { name: "Ambient Occlusion", check: true },
  { name: "Bloom", check: true },
  { name: "Depth of Field" },
  { name: "Subsurface Scattering" },
  { name: "Screen Space Reflections", check: true },
  { name: "Motion Blur", check: true },
  { name: "Volumetrics" },
  { name: "Performance" },
  { name: "Hair" },
  { name: "Shadows" },
  { name: "Indirect Lighting" },
  { name: "Film" },
  { name: "Simplify", check: true },
  { name: "Freestyle", check: true },
  { name: "Color Management" },
];

const propertyTabs = ["restrict", "output", "viewLayer", "scene", "world"];
const objectTabs = ["object", "wrench", "particles", "physics", "constraint", "meshTab", "matTab"];

const Properties = () => (
  <div className="mt-[2px] flex h-[487px] flex-col overflow-hidden rounded-b-[4px]">
    <div className="flex h-[17px] items-center bg-[#272727] pl-[5px] pr-[7px]">
      <IconGroup className="w-[13px]" icons={["propEditor"]} />
      <div className="ml-[10px]">
        <Icon name="scene" />
      </div>
      <span className="ml-[5px]">Scene</span>
      <div className="ml-auto">
        <Icon name="pin" />
      </div>
    </div>
    <div className="flex flex-1">
      <div className="w-[18px] bg-[#202020] pt-[6px]">
        {propertyTabs.map((tab, i) => (
          <div
            key={tab}
            className={`mb-px flex h-[17.7px] items-center justify-center ${i === 0 ? "rounded-l-[3px] bg-[#424242]" : "bg-[#2b2b2b]"}`}
          >
            <Icon name={tab} />
          </div>
        ))}
        <div className="h-[5px]" />
        {objectTabs.map((tab) => (
          <div key={tab} className="mb-px flex h-[17.7px] items-center justify-center bg-[#2b2b2b]">
            <Icon name={tab} />
          </div>
        ))}
      </div>
      <div className="flex-1 bg-[#424242]">
        <div className="flex h-[25px] items-center pl-[6px] pr-[4px]">
          <span className="w-[76px]">Render Engine</span>
          <div className="flex h-[13px] flex-1 items-center justify-between rounded-[2px] bg-[#374968] pl-[5px] pr-[2px] text-white">
            Eevee
            <Chevron />
          </div>
        </div>
        <div className="flex h-[15px] items-center bg-[#333] pl-[6px] pr-1">
          <Arrow open />
          <span className="ml-[4px] text-[8.2px]">Sampling</span>
          <div className="ml-auto">
            <Grip />
          </div>
        </div>
        <div className="h-[55px] pl-[6px] pr-[4px] pt-[5px]">
          <div className="flex h-[13px] items-center">
            <span className="w-[76px]">Render</span>
            <div className="flex h-[13px] flex-1 items-center justify-center rounded-t-[2px] bg-[#393939]">64</div>
          </div>
          <div className="mt-px flex h-[13px] items-center">
            <span className="w-[76px]">Viewport</span>
            <div className="flex h-[13px] flex-1 items-center justify-center rounded-b-[2px] bg-[#393939]">16</div>
          </div>
          <div className="mt-[3px] flex h-[14px] items-center gap-[2px] text-[#d9f3fa]">
            <Check on />
            Viewport Denoising
          </div>
        </div>
        <div className="h-[240px] bg-[#333] text-[8.2px]">
          {sections.map((s) => (
            <div key={s.name} className="flex h-4 items-center pl-[6px] pr-1">
              <Arrow />
              {s.check && (
                <div className="-mr-[2px] ml-[4px]">
                  <Check />
                </div>
              )}
              <span className="ml-[4px]">{s.name}</span>
              <div className="ml-auto">
                <Grip />
              </div>
            </div>
          ))}
        </div>
      </div>
    </div>
  </div>
);

const StatusBar = () => (
  <div className="flex h-3 items-center bg-[#2d2d2d] pl-[7px] pr-[22px] text-[#9a9a9a]">
    <Icon name="mouseL" />
    <div className="ml-[147px]">
      <Icon name="mouseM" />
    </div>
    <span className="ml-[6px] w-[141px]">Pan View</span>
    <Icon name="mouseR" />
    <span className="ml-auto">Mem: 16.4 MiB</span>
  </div>
);

const Taskbar = () => (
  <div className="flex h-[27px] items-center bg-[#1a2a2f] pl-[10px] pr-[4px]">
    <svg width="12" height="12" viewBox="0 0 12 12">
      <path d="M0 1.700 5.200.9v4.700H0zM6 .8 12 0v5.600H6zM0 6.400h5.200v4.700L0 10.300zM6 6.400h6V12l-6-.8z" fill="#fff" />
    </svg>
    <svg width="12" height="12" viewBox="0 0 12 12" className="ml-[20px]">
      <circle cx="7.2" cy="4.5" r="3.7" fill="none" stroke="#fff" strokeWidth="1.1" />
      <path d="M4.600 7.200 1 11" stroke="#fff" strokeWidth="1.1" />
    </svg>
    <div className="ml-[12px] flex h-[27px] w-8 items-center justify-center border-b-2 border-[#a9bdc6] bg-[#48565b]">
      <Icon name="logo" size={17} />
    </div>
    <div className="ml-auto flex flex-col items-center pb-px font-['Noto_Sans','Open_Sans',sans-serif] text-[7.2px] font-medium leading-[12px] text-white">
      <span>11:19</span>
      <span>05.05.2020</span>
    </div>
  </div>
);

const App: React.FC = () => {
  return (
    <div className="h-[720px] w-[1280px] cursor-default select-none overflow-hidden whitespace-nowrap bg-[#1c1c1c] font-['DejaVu_Sans_Condensed','DejaVu_Sans',sans-serif] text-[7.5px] leading-none text-[#d6d6d6]">
      <TitleBar />
      <MenuBar />
      <div className="flex h-[648px]">
        <div className="mr-[3px] w-[1056px]">
          <Toolbar />
          <ToolSettings />
          <Viewport />
          <Timeline />
        </div>
        <div className="mt-px flex-1">
          <Outliner />
          <Properties />
        </div>
      </div>
      <StatusBar />
      <Taskbar />
    </div>
  );
};

export default App;
